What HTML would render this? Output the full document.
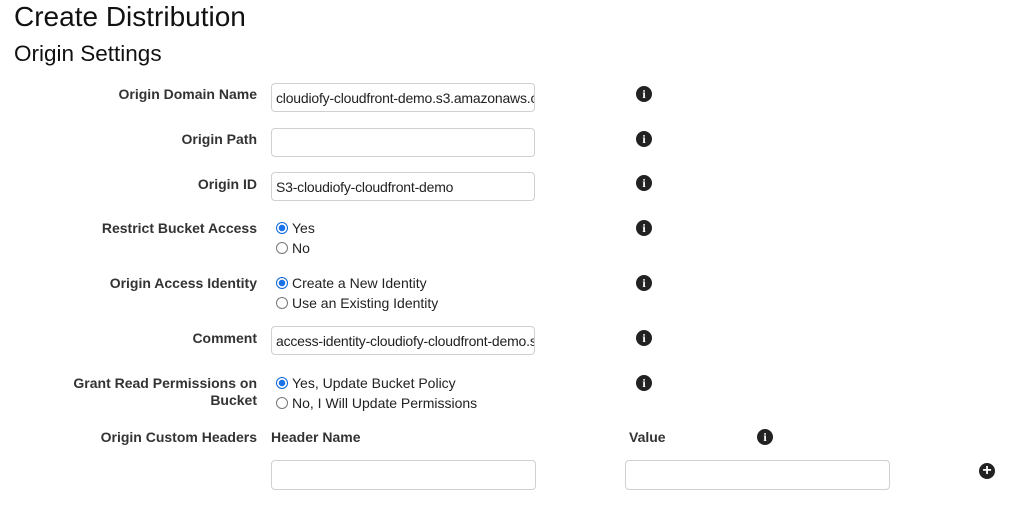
<!DOCTYPE html><html><head><style>
body{margin:0;width:1024px;height:509px;background:#fff;font-family:"Liberation Sans",Arial,sans-serif;color:#222;position:relative;overflow:hidden}
.a{position:absolute;white-space:nowrap}
.l{position:absolute;right:767px;font-weight:bold;font-size:14px;color:#333;text-align:right;line-height:17px}
.in{position:absolute;left:271px;width:264px;height:28px;border:1px solid #d0d0d0;border-radius:4px;font-size:14px;line-height:28px;padding-left:4px;box-sizing:border-box;overflow:hidden;white-space:nowrap;color:#222;letter-spacing:-0.2px}
.r{position:absolute;left:276px;font-size:14px;line-height:18px;color:#222}
.r i{display:inline-block;width:12px;height:12px;border:1px solid #777;border-radius:50%;box-sizing:border-box;vertical-align:-1px;margin-right:4px}
.r i.on{border:1px solid #0a66d8;background:radial-gradient(circle,#1a73e8 0 3px,#fff 3.5px)}
.ic{position:absolute;width:16px;height:16px;border-radius:50%;background:#222;color:#fff;font:bold 12px/16px "Liberation Serif",serif;text-align:center}
</style></head><body>
<div class="a" style="left:14px;top:1px;font-size:28px;color:#111">Create Distribution</div>
<div class="a" style="left:14px;top:41px;font-size:22.5px;color:#111">Origin Settings</div>

<div class="l" style="top:86px">Origin Domain Name</div>
<div class="in" style="top:83px;height:29px">cloudiofy-cloudfront-demo.s3.amazonaws.com</div>
<div class="l" style="top:131px">Origin Path</div>
<div class="in" style="top:128px;height:29px"></div>
<div class="l" style="top:176px">Origin ID</div>
<div class="in" style="top:172px;height:29px">S3-cloudiofy-cloudfront-demo</div>
<div class="l" style="top:220px">Restrict Bucket Access</div>
<div class="r" style="top:219px"><i class="on"></i>Yes</div>
<div class="r" style="top:239px"><i></i>No</div>
<div class="l" style="top:275px">Origin Access Identity</div>
<div class="r" style="top:274px"><i class="on"></i>Create a New Identity</div>
<div class="r" style="top:294px"><i></i>Use an Existing Identity</div>
<div class="l" style="top:330px">Comment</div>
<div class="in" style="top:326px;height:29px">access-identity-cloudiofy-cloudfront-demo.s3.amazonaws.com</div>
<div class="l" style="top:375px">Grant Read Permissions on<br>Bucket</div>
<div class="r" style="top:374px"><i class="on"></i>Yes, Update Bucket Policy</div>
<div class="r" style="top:394px"><i></i>No, I Will Update Permissions</div>
<div class="l" style="top:429px">Origin Custom Headers</div>
<div class="a" style="left:271px;top:429px;font-weight:bold;font-size:14px;color:#333">Header Name</div>
<div class="a" style="left:629px;top:429px;font-weight:bold;font-size:14px;color:#333">Value</div>
<div class="in" style="top:460px;width:265px;height:30px"></div>
<div class="in" style="top:460px;left:625px;width:265px;height:30px"></div>

<div class="ic" style="left:636px;top:86px">i</div>
<div class="ic" style="left:636px;top:131px">i</div>
<div class="ic" style="left:636px;top:175px">i</div>
<div class="ic" style="left:636px;top:220px">i</div>
<div class="ic" style="left:636px;top:275px">i</div>
<div class="ic" style="left:636px;top:330px">i</div>
<div class="ic" style="left:636px;top:375px">i</div>
<div class="ic" style="left:757px;top:429px">i</div>
<div class="ic" style="left:979px;top:463px;font:bold 16px/16px 'Liberation Sans',sans-serif">+</div>
</body></html>
